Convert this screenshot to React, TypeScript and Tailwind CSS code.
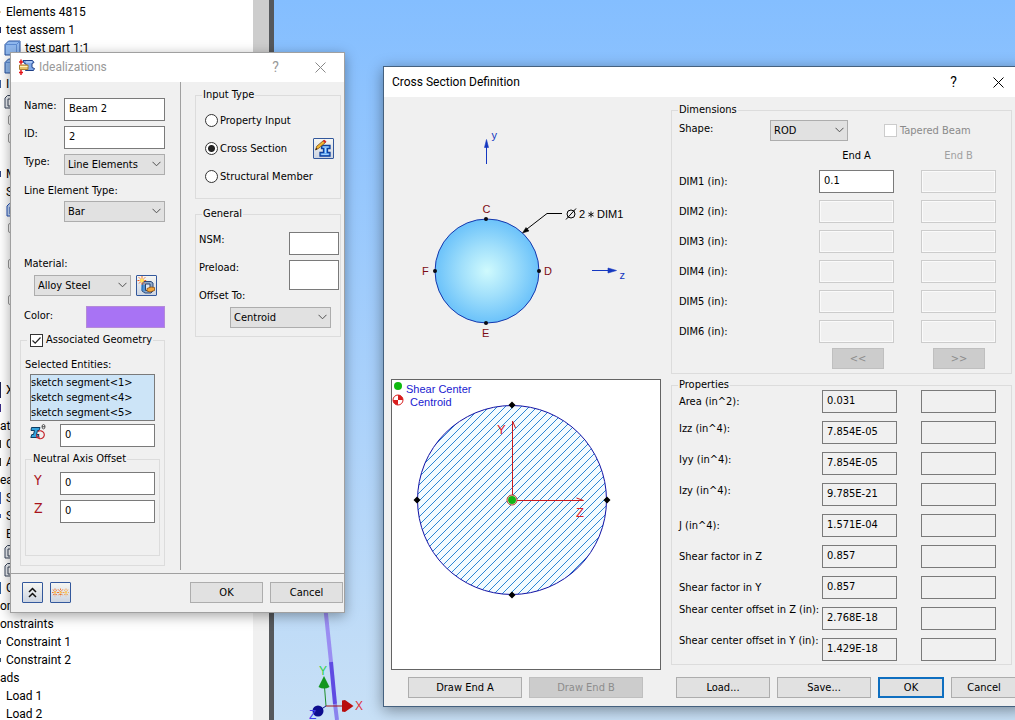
import React, { ReactNode, useState } from "react";

const UI_FONT = "font-['DejaVu_Sans_Condensed','DejaVu_Sans',sans-serif]";
const TITLE_FONT = "font-[Roboto,'Open_Sans',sans-serif]";

/* ---------- form controls ---------- */

type FieldProps = { id: string; label?: string; value?: string; disabled?: boolean; readOnly?: boolean; className?: string };

function TextField({ id, label, value = "", disabled, readOnly, className = "h-[23px]" }: FieldProps) {
  const tone = disabled
    ? "border-[#cccccc] bg-[#f0f0f0] shadow-[inset_0_0_0_1px_#fafafa]"
    : readOnly
      ? "border-[#7a7a7a] bg-[#f0f0f0]"
      : "border-[#7a7a7a] bg-white";
  return (
    <input
      id={id}
      type="text"
      aria-label={label}
      defaultValue={value}
      disabled={disabled}
      readOnly={readOnly}
      className={`block w-full min-w-0 border px-1 pb-0.5 text-[11px] leading-[14px] text-black outline-none ${tone} ${className}`}
    />
  );
}

function Select({ id, label, value, className = "" }: { id: string; label?: string; value: string; className?: string }) {
  return (
    <div className={`relative h-[21px] ${className}`}>
      <select
        id={id}
        aria-label={label}
        defaultValue={value}
        className="h-full w-full appearance-none border border-[#adadad] bg-[#e1e1e1] pr-4 pl-[3px] text-[11px] leading-[14px] text-black outline-none"
      >
        <option>{value}</option>
      </select>
      <svg className="pointer-events-none absolute top-[7px] right-1 h-[6px] w-[9px]" viewBox="0 0 9 6" fill="none" stroke="#505050">
        <path d="M0.5 0.8 4.5 4.8 8.5 0.8" />
      </svg>
    </div>
  );
}

function PushButton({ children, disabled, primary, className = "" }: { children: ReactNode; disabled?: boolean; primary?: boolean; className?: string }) {
  const tone = disabled
    ? "border border-[#bfbfbf] bg-[#cccccc] text-[#8c8c8c]"
    : primary
      ? "border-2 border-[#0f6fc0] bg-[#e1e1e1] text-black"
      : "border border-[#adadad] bg-[#e1e1e1] text-black";
  return (
    <button type="button" disabled={disabled} className={`flex h-[21px] shrink-0 items-center justify-center text-[11px] leading-[14px] ${tone} ${className}`}>
      {children}
    </button>
  );
}

function IconButton({ label, children }: { label: string; children: ReactNode }) {
  return (
    <button
      type="button"
      aria-label={label}
      className="flex h-[21px] w-[21px] shrink-0 items-center justify-center rounded-[1px] border border-[#33589c] bg-linear-to-b from-[#f6f6f2] to-[#cdd5e2]"
    >
      {children}
    </button>
  );
}

function Group({ title, children, className = "", body = "" }: { title: ReactNode; children: ReactNode; className?: string; body?: string }) {
  return (
    <fieldset className={`min-w-0 border border-[#dcdcdc] ${className}`}>
      <legend className="ml-[6px] h-[14px] px-px leading-[14px]">{title}</legend>
      <div className={body}>{children}</div>
    </fieldset>
  );
}

function Radio({ id, label, checked, onSelect }: { id: string; label: string; checked: boolean; onSelect: () => void }) {
  return (
    <div className="flex items-center gap-0.5">
      <input
        id={id}
        type="radio"
        name="input-type"
        checked={checked}
        onChange={onSelect}
        className="h-[13px] w-[13px] appearance-none rounded-full border border-[#333333] bg-white checked:bg-[radial-gradient(circle,#222_0,#222_3px,#fff_4px)]"
      />
      <label htmlFor={id}>{label}</label>
    </div>
  );
}

/* ---------- icons ---------- */

function IdealizationIcon() {
  return (
    <svg width="17" height="17" viewBox="0 0 17 17">
      <path d="M5 1.500h9.500l1.500 2-2 1v4l2.500 1-1 2H7.500L6 10l2-1.500V5L6 4z" fill="#7fa9ea" stroke="#1f3f86" />
      <path d="M8 3h6" stroke="#d6e6ff" />
      <path d="M1.500 6h8.500v4.500H1.500z" fill="#e9c36a" stroke="#a87f34" />
      <path d="M2 7.500h7.500" stroke="#fff2bf" />
      <path d="M3 0.500v5M1 3h4M3 11v5M1 13.500h4" stroke="#e3161b" strokeWidth="1.500" />
    </svg>
  );
}

function SectionEditIcon() {
  return (
    <svg width="19" height="19" viewBox="0 0 19 19">
      <path d="M7.500 6.500H16v3h-2.500v4H16V17H6v-3.500h3.500v-4h-2z" fill="#5aa5f5" stroke="#0e3f9d" strokeWidth="1.300" />
      <path d="M9 8h5.500M11.500 9v5M7.500 15.300h7" stroke="#b6dcff" />
      <path d="m1.500 11 1.300-3.800L9.500 1.500l2 2L4.800 9.200z" fill="#f2b632" stroke="#7a4a12" strokeWidth=".8" />
      <path d="m8.800 2.100 1.700-1.400 2 2-1.700 1.400z" fill="#d92626" />
      <path d="m1.500 11 .6-1.900 1.300 1z" fill="#111" />
    </svg>
  );
}

function NewMaterialIcon() {
  return (
    <svg width="19" height="19" viewBox="0 0 19 19">
      <path d="M6 5.500h8l2 1.500v8l-2 2H8l-3-2z" fill="#8fa9c9" stroke="#2c4a7c" />
      <path d="M8.500 8h4.500v6.500H8.500z" fill="#dbe7f5" stroke="#27426d" />
      <path d="M5 8.500v6M7 9v6.500" stroke="#2e86d8" strokeWidth="1.300" />
      <path d="m10 12.500 4-1.500 3.500.5v3L13 16l-3-1z" fill="#f0a53a" stroke="#8a4e10" strokeWidth=".8" />
      <path d="M5 0v9M0.500 4.500h9M1.800 1.300l6.400 6.400M8.200 1.300 1.800 7.700" stroke="#ee5a1b" strokeDasharray="1.800 .5" />
      <circle cx="5" cy="4.500" r="1.900" fill="#ffe45a" />
    </svg>
  );
}

function RotateSectionIcon() {
  return (
    <svg width="17" height="17" viewBox="0 0 17 17">
      <path d="M1.500 3.500h8.500l-1 3H7.500l-1 4H9l-1 3H0.800l1-3h1.700l1-4H1z" fill="#36a3dc" stroke="#0b3c62" />
      <path d="M7 13a4 4 0 1 0 1-5.500M6.500 10.500 7 13.500l3-.5" fill="none" stroke="#c5262c" strokeWidth="1.200" />
      <ellipse cx="13.500" cy="2.700" rx="1.500" ry="2.200" fill="none" stroke="#333" strokeWidth=".8" />
      <path d="M12 2.700h3" stroke="#333" strokeWidth=".8" />
    </svg>
  );
}

function CollapseIcon() {
  return (
    <svg width="11" height="13" viewBox="0 0 11 13" fill="none" stroke="#111" strokeWidth="1.500">
      <path d="m2 6 3.500-3.500L9 6M2 11l3.500-3.500L9 11" />
    </svg>
  );
}

function SparksIcon() {
  return (
    <svg width="17" height="11" viewBox="0 0 17 11" strokeWidth="1">
      {[3, 8.5, 14].map((x, i) => (
        <g key={x} stroke={i === 2 ? "#f5a04a" : "#ee6a22"} opacity="0.9">
          <path
            d={`M${x} 1.500v8M${x - 3} 5.500h6M${x - 2} 2.500l4 6M${x + 2} 2.500l-4 6`}
            strokeDasharray="1.6 1"
          />
          <circle cx={x} cy="5.500" r="1" fill="#ffd34a" stroke="none" />
        </g>
      ))}
    </svg>
  );
}

function CloseIcon() {
  return (
    <svg width="11" height="11" viewBox="0 0 11 11" stroke="currentColor">
      <path d="m0.500 0.500 10 10M10.500 0.500l-10 10" />
    </svg>
  );
}

/* ---------- model tree behind the dialogs ---------- */

type Node = { text?: string; x?: string; icon?: "part" | "box" | "copy"; box?: boolean; mark?: string };

const EDGE = "pl-[6px]";
const nodes: Node[] = [
  { text: "Elements 4815", x: EDGE, mark: "bg-[#c89a4a] h-px" },
  { text: "test assem 1", x: EDGE, mark: "bg-[#1d2c66] h-1.5" },
  { text: "test part 1:1", x: "pl-[4px]", icon: "part" },
  { text: "", x: "pl-[4px]", icon: "part" },
  { text: "I", x: EDGE, mark: "bg-[#3b5f9d] h-2" },
  { x: "pl-[4px]", icon: "box" },
  { box: true },
  { box: true },
  {},
  { text: "M", x: EDGE, mark: "bg-[#2e4686] h-1.5" },
  { text: "S", x: EDGE },
  { x: "pl-[6px]", icon: "copy" },
  { box: true },
  {},
  { box: true },
  {},
  { box: true },
  {}, {}, {}, {},
  { text: "X", x: EDGE, mark: "bg-[#1d2456] h-4" },
  { mark: "bg-[#3a2a86] h-2" },
  { text: "ate", x: "pl-0" },
  { text: "C", x: EDGE, mark: "bg-[#333333] h-2" },
  { text: "A", x: EDGE, mark: "bg-[#333333] h-2" },
  { text: "ea", x: "pl-0" },
  { text: "S", x: EDGE, mark: "bg-[#3a5cae] h-3" },
  { text: "S", x: EDGE, mark: "bg-[#3a5cae] h-1" },
  { text: "E", x: EDGE },
  { x: "pl-[4px]", icon: "box" },
  { x: "pl-[4px]", icon: "box" },
  { text: "G", x: EDGE, mark: "bg-[#2f5f9e] h-3" },
  { text: "om", x: "pl-0" },
  { text: "onstraints", x: "pl-0" },
  { text: "Constraint 1", x: EDGE, mark: "bg-[#35506e] h-1" },
  { text: "Constraint 2", x: EDGE, mark: "bg-[#35506e] h-1" },
  { text: "ads", x: "pl-0" },
  { text: "Load 1", x: EDGE },
  { text: "Load 2", x: EDGE },
];

function TreeIcon({ kind }: { kind: "part" | "box" | "copy" }) {
  if (kind === "part") {
    return (
      <svg width="17" height="16" viewBox="0 0 17 16">
        <path d="M1 4.500 4.500 1H16v10.500L13 15H1z" fill="#8fb8ee" stroke="#27509c" />
        <path d="M1 4.500h11.500V15M12.500 4.500 16 1" fill="none" stroke="#5c8bd2" />
      </svg>
    );
  }
  return (
    <svg width="15" height="14" viewBox="0 0 15 14" fill={kind === "copy" ? "#c3d8f8" : "#e9edf2"} stroke={kind === "copy" ? "#2550b0" : "#39455a"}>
      <path d="M1 3 3.500 0.500H14v9L11.500 13H1z" />
      <path d="M4 4h8v7H4z" fill="#fff" />
    </svg>
  );
}

function ModelTree() {
  return (
    <div className="flex h-full w-[274px] shrink-0">
      <ul className={`min-w-0 flex-1 overflow-hidden bg-white pt-[3px] text-[12px] whitespace-nowrap text-black ${TITLE_FONT}`}>
        {nodes.map((n, i) => (
          <li key={i} className={`relative flex h-[18px] items-center gap-1 leading-[18px] ${n.x ?? "pl-[8px]"}`}>
            {n.mark && <i className={`absolute top-1/2 left-0 w-px -translate-y-1/2 ${n.mark}`} />}
            {n.icon && <TreeIcon kind={n.icon} />}
            {n.box && <i className="h-[10px] w-[10px] rounded-[2px] border border-[#999999]" />}
            {n.text}
          </li>
        ))}
      </ul>
      <div className="flex w-4 flex-col bg-[#f0f0f0]">
        <div className="h-1/2 bg-[#cdcdcd]" />
      </div>
      <div className="w-[5px] bg-[#55585c]" />
    </div>
  );
}

function Viewport() {
  return (
    <div className="flex min-w-0 flex-1 items-end bg-linear-to-b from-[#84beff] to-[#c8e0f6]">
      <svg width="110" height="120" viewBox="274 600 110 120" className="font-['Liberation_Sans',sans-serif] text-[12px]">
        <path d="M324.500 600 331 662" stroke="#9a8df2" strokeWidth="4" />
        <path d="M331 662 335 704" stroke="#5f4be2" strokeWidth="4" />
        <path d="M335 704 337 720" stroke="#8a83ee" strokeWidth="4" />
        <path d="M326 706 324.500 687" stroke="#1f8f2c" />
        <path d="M324 676 318.500 687q5.500 3 11 0z" fill="#12961f" />
        <path d="M326 706h17" stroke="#a31219" />
        <path d="M342 700.500v11l3 .5 8.500-6-8.500-6z" fill="#b80d0d" />
        <path d="m326 706-6 4" stroke="#15158c" />
        <circle cx="318" cy="711" r="5.500" fill="#0d0d8e" />
        <text x="319" y="675" fill="#2fd04a">Y</text>
        <text x="355" y="710" fill="#e0343c">X</text>
        <text x="309" y="719" fill="#3c3cf0">Z</text>
      </svg>
    </div>
  );
}

/* ---------- Idealizations dialog ---------- */

function IdealizationsDialog() {
  const [kind, setKind] = useState("cross");
  const [linked, setLinked] = useState(true);
  return (
    <section
      aria-label="Idealizations"
      className="absolute top-[52px] left-[10px] flex w-[335px] flex-col border border-[#a0a0a0] bg-[#f0f0f0] text-[11px] leading-[14px] text-black shadow-[0_3px_12px_rgba(0,0,0,0.35)]"
    >
      <header className={`flex h-[29px] items-center bg-white pr-px pb-px pl-[7px] text-[12px] text-[#999999] ${TITLE_FONT}`}>
        <IdealizationIcon />
        <h2 className="flex-1 pl-1">Idealizations</h2>
        <button type="button" aria-label="Help" className="flex w-[45px] justify-center text-[14px]">?</button>
        <button type="button" aria-label="Close" className="flex w-[45px] justify-center text-[#888888]"><CloseIcon /></button>
      </header>

      <div className="flex pb-[3px]">
        <div className="flex w-[170px] flex-col border-r border-[#a0a0a0] pt-4 pr-[15px] pb-1 pl-[13px]">
          <div className="grid grid-cols-[40px_1fr] items-start gap-y-[5px]">
            <label htmlFor="name" className="leading-4">Name:</label>
            <TextField id="name" value="Beam 2" />
            <label htmlFor="beam-id" className="leading-4">ID:</label>
            <TextField id="beam-id" value="2" />
            <label htmlFor="type" className="leading-4">Type:</label>
            <Select id="type" value="Line Elements" />
          </div>
          <label htmlFor="line-type" className="mt-2 leading-4">Line Element Type:</label>
          <Select id="line-type" value="Bar" className="mt-0.5 ml-10" />

          <label htmlFor="material" className="mt-[34px] leading-4">Material:</label>
          <div className="mt-[3px] mr-2 ml-[10px] flex gap-[5px]">
            <Select id="material" value="Alloy Steel" className="flex-1" />
            <IconButton label="New material"><NewMaterialIcon /></IconButton>
          </div>
          <div className="mt-[10px] flex justify-between">
            <span className="pt-0.5 leading-4">Color:</span>
            <button type="button" aria-label="Color" className="h-[22px] w-[79px] border border-[#b48ad8] bg-[#a873f4]" />
          </div>

          <Group
            className="mt-[5px] -ml-1"
            body="px-1 pb-[9px]"
            title={
              <span className="flex items-center gap-[3px] pl-0.5">
                <span className="relative flex">
                  <input
                    id="linked"
                    type="checkbox"
                    checked={linked}
                    onChange={() => setLinked(!linked)}
                    className="h-[13px] w-[13px] appearance-none border border-[#333333] bg-white"
                  />
                  {linked && (
                    <svg className="pointer-events-none absolute inset-0" width="13" height="13" viewBox="0 0 13 13" fill="none" stroke="#222" strokeWidth="1.200">
                      <path d="m2.500 6.500 2.700 2.700 5.300-5.700" />
                    </svg>
                  )}
                </span>
                <label htmlFor="linked">Associated Geometry</label>
              </span>
            }
          >
            <div className="pt-[10px] leading-4">Selected Entities:</div>
            <ul role="listbox" aria-label="Selected Entities" className="mx-[5px] mt-px border border-[#7a7a7a] bg-[#cce4f7] leading-[15px]">
              <li role="option" aria-selected="true">sketch segment&lt;1&gt;</li>
              <li role="option" aria-selected="true">sketch segment&lt;4&gt;</li>
              <li role="option" aria-selected="true">sketch segment&lt;5&gt;</li>
            </ul>
            <div className="mx-[5px] mt-[3px] grid grid-cols-[30px_1fr]">
              <RotateSectionIcon />
              <TextField id="angle" label="Orientation angle" value="0" />
            </div>
            <Group title="Neutral Axis Offset" className="mt-[5px]" body="px-1 pb-8">
              <div className="grid grid-cols-[30px_1fr] items-start gap-y-[5px] pt-[6px]">
                <label htmlFor="off-y" className="pl-1 text-[14px] leading-4 text-[#a8141c]">Y</label>
                <TextField id="off-y" value="0" />
                <label htmlFor="off-z" className="pl-1 text-[14px] leading-4 text-[#a8141c]">Z</label>
                <TextField id="off-z" value="0" />
              </div>
            </Group>
          </Group>
        </div>

        <div className="flex min-w-0 flex-1 flex-col gap-2 pt-[6px] pr-[3px] pl-[14px]">
          <Group title="Input Type" body="pr-[6px] pb-[11px] pl-[9px]">
            <div className="flex flex-col gap-[7px] pt-2">
              <div className="flex h-[21px] items-center">
                <Radio id="in-prop" label="Property Input" checked={kind === "prop"} onSelect={() => setKind("prop")} />
              </div>
              <div className="flex h-[21px] items-center justify-between">
                <Radio id="in-cross" label="Cross Section" checked={kind === "cross"} onSelect={() => setKind("cross")} />
                <IconButton label="Edit cross section"><SectionEditIcon /></IconButton>
              </div>
              <div className="flex h-[21px] items-center">
                <Radio id="in-member" label="Structural Member" checked={kind === "member"} onSelect={() => setKind("member")} />
              </div>
            </div>
          </Group>
          <Group title="General" body="pr-px pb-2 pl-[3px]">
            <div className="grid grid-cols-[1fr_50px] items-start gap-y-[5px] pt-[11px]">
              <label htmlFor="nsm" className="leading-4">NSM:</label>
              <TextField id="nsm" />
              <label htmlFor="preload" className="leading-4">Preload:</label>
              <TextField id="preload" className="h-[30px]" />
            </div>
            <label htmlFor="offset-to" className="-mt-0.5 block leading-4">Offset To:</label>
            <Select id="offset-to" value="Centroid" className="mt-[3px] mr-2 ml-[31px]" />
          </Group>
        </div>
      </div>

      <footer className="flex gap-[7px] border-t border-[#a0a0a0] pt-2 pr-px pb-[9px] pl-[11px]">
        <IconButton label="Collapse"><CollapseIcon /></IconButton>
        <IconButton label="Preview"><SparksIcon /></IconButton>
        <PushButton className="ml-auto w-[73px]">OK</PushButton>
        <PushButton className="w-[73px]">Cancel</PushButton>
      </footer>
    </section>
  );
}

/* ---------- Cross Section Definition dialog ---------- */

function ShapeDiagram() {
  return (
    <svg width="270" height="282" viewBox="391 97 270 282" className="font-['Liberation_Sans',sans-serif] text-[11px]">
      <defs>
        <radialGradient id="rod">
          <stop offset="0" stopColor="#cffafd" />
          <stop offset="0.500" stopColor="#a0dffb" />
          <stop offset="1" stopColor="#6bc2fa" />
        </radialGradient>
      </defs>
      <circle cx="487" cy="271" r="52" fill="url(#rod)" stroke="#1437ae" />
      <g fill="#0a0a14">
        <circle cx="486" cy="219" r="2" />
        <circle cx="539" cy="271" r="2" />
        <circle cx="486" cy="323" r="2" />
        <circle cx="435" cy="271" r="2" />
      </g>
      <g stroke="#1437c0" fill="#1437c0">
        <path d="M486.500 164v-18" />
        <path d="M486.500 139.500 484.500 147.500h4z" strokeWidth=".6" />
        <path d="M592 270.500h17" />
        <path d="M616.500 270.500 608 268v5z" strokeWidth=".6" />
      </g>
      <path d="M562 213.500h-15L527 229" fill="none" stroke="#000" />
      <path d="m522.500 233 3.500-5.500 3 3.500z" fill="#000" stroke="#000" strokeWidth=".5" />
      <g fill="#1437c0">
        <text x="491.500" y="139">y</text>
        <text x="619.500" y="279">z</text>
      </g>
      <g fill="#7c0b12">
        <text x="482.500" y="213">C</text>
        <text x="544" y="275">D</text>
        <text x="482" y="337">E</text>
        <text x="422" y="275">F</text>
      </g>
      <g fill="none" stroke="#000">
        <circle cx="571" cy="214" r="4" />
        <path d="m566 219.500 10-11" />
      </g>
      <g fill="#000">
        <text x="579" y="218">2</text>
        <text x="597" y="218">DIM1</text>
      </g>
      <path d="M591 211.500v6M588.400 213l5.200 3M593.600 213l-5.200 3" stroke="#000" strokeWidth=".9" />
    </svg>
  );
}

function SectionPreview() {
  return (
    <svg width="268" height="289" viewBox="392 380 268 289" className="block font-['Liberation_Sans',sans-serif] text-[11px]">
      <defs>
        <pattern id="hatch" width="8" height="8" patternUnits="userSpaceOnUse">
          <rect width="8" height="8" fill="#f3fbff" />
          <path d="M-1 9 9-1M-1 1 1-1M7 9l2-2" stroke="#2b86d4" shapeRendering="crispEdges" />
        </pattern>
      </defs>
      <circle cx="512" cy="500" r="94.500" fill="url(#hatch)" stroke="#1010a4" />
      <path d="m512 401.500 3.500 3.500-3.500 3.500-3.500-3.500zM607 496.500l3.500 3.500-3.500 3.500-3.500-3.500zM512 591.500l3.500 3.500-3.500 3.500-3.500-3.500zM417 496.500l3.500 3.500-3.500 3.500-3.500-3.500z" fill="#000" />
      <path d="M512.500 500v-79l3 7M512 500.500h71.500l-7-2.500" fill="none" stroke="#c81a20" />
      <circle cx="512" cy="500" r="5" fill="#fff" stroke="#b0332a" />
      <circle cx="512" cy="500" r="4" fill="#14b414" />
      <g fill="#d8232b" className="text-[13px]">
        <text x="497" y="434">Y</text>
        <text x="576" y="517">Z</text>
      </g>
      <circle cx="398" cy="386" r="4" fill="#0fb80f" />
      <circle cx="398" cy="400" r="5" fill="#fff" stroke="#d81e1e" />
      <path d="M398 400v-5a5 5 0 0 1 5 5zM398 400v5a5 5 0 0 1-5-5z" fill="#d81e1e" />
      <g fill="#1a1ad0">
        <text x="406" y="393">Shear Center</text>
        <text x="410" y="406">Centroid</text>
      </g>
    </svg>
  );
}

const dims = ["DIM1", "DIM2", "DIM3", "DIM4", "DIM5", "DIM6"];
const RAISED = "pb-[7px]";
const TOP = "self-start -mt-1";
const props: [string, string, string][] = [
  ["Area (in^2):", "0.031", ""],
  ["Izz (in^4):", "7.854E-05", RAISED],
  ["Iyy (in^4):", "7.854E-05", RAISED],
  ["Izy (in^4):", "9.785E-21", RAISED],
  ["J (in^4):", "1.571E-04", ""],
  ["Shear factor in Z", "0.857", ""],
  ["Shear factor in Y", "0.857", ""],
  ["Shear center offset in Z (in):", "2.768E-18", TOP],
  ["Shear center offset in Y (in):", "1.429E-18", TOP],
];

function CrossSectionDialog() {
  return (
    <section
      aria-label="Cross Section Definition"
      className="absolute top-[66px] left-[383px] flex w-[641px] flex-col border border-[#45617f] bg-[#f0f0f0] text-[11px] leading-[14px] text-black shadow-[0_3px_14px_rgba(0,0,0,0.4)]"
    >
      <header className={`flex h-[30px] items-center bg-white pr-0.5 pl-2 text-[12px] ${TITLE_FONT}`}>
        <h2 className="flex-1">Cross Section Definition</h2>
        <button type="button" aria-label="Help" className="flex w-[45px] justify-center text-[14px]">?</button>
        <button type="button" aria-label="Close" className="flex w-[45px] justify-center"><CloseIcon /></button>
      </header>

      <div className="flex gap-[10px] pr-[11px] pl-[7px]">
        <div className="w-[270px] shrink-0">
          <ShapeDiagram />
          <div className="border border-[#646464] bg-white"><SectionPreview /></div>
        </div>

        <div className="flex min-w-0 flex-1 flex-col gap-1 pt-[6px]">
          <Group title="Dimensions" body="pb-1 pl-[7px]">
            <div className="flex items-center pt-[3px]">
              <label htmlFor="shape" className="w-[91px] pb-1">Shape:</label>
              <Select id="shape" value="ROD" className="w-[78px]" />
              <input id="tapered" type="checkbox" disabled className="ml-9 h-[13px] w-[13px] appearance-none border border-[#cccccc] bg-white" />
              <label htmlFor="tapered" className="pl-[3px] text-[#8a8a8a]">Tapered Beam</label>
            </div>
            <div className="mt-2 grid grid-cols-[140px_75px_27px_75px] items-center gap-y-[7px]">
              <span />
              <span className="text-center">End A</span>
              <span />
              <span className="text-center text-[#a0a0a0]">End B</span>
              {dims.map((d, i) => (
                <React.Fragment key={d}>
                  <label htmlFor={`${d}-a`}>{d} (in):</label>
                  <TextField id={`${d}-a`} value={i === 0 ? "0.1" : ""} disabled={i > 0} />
                  <span />
                  <TextField id={`${d}-b`} label={`${d} End B`} disabled />
                </React.Fragment>
              ))}
            </div>
            <div className="mt-[5px] flex gap-[49px] pl-[153px]">
              <PushButton disabled className="w-[52px]">&lt;&lt;</PushButton>
              <PushButton disabled className="w-[52px]">&gt;&gt;</PushButton>
            </div>
          </Group>

          <Group title="Properties" body="pb-[3px] pl-[7px]">
            <div className="-mt-0.5 grid grid-cols-[143px_75px_24px_75px] items-center gap-y-2">
              {props.map(([name, value, align], i) => (
                <React.Fragment key={name}>
                  <label htmlFor={`prop-${i}`} className={`whitespace-nowrap ${align}`}>{name}</label>
                  <TextField id={`prop-${i}`} value={value} readOnly />
                  <span />
                  <TextField id={`prop-${i}-b`} label={`${name} End B`} readOnly />
                </React.Fragment>
              ))}
            </div>
          </Group>
        </div>
      </div>

      <footer className="flex gap-[7px] pt-[7px] pb-2 pl-6">
        <PushButton className="w-[114px]">Draw End A</PushButton>
        <PushButton disabled className="mr-[26px] w-[114px]">Draw End B</PushButton>
        <PushButton className="w-[94px]">Load...</PushButton>
        <PushButton className="w-[94px]">Save...</PushButton>
        <PushButton primary className="w-[66px]">OK</PushButton>
        <PushButton className="w-[66px]">Cancel</PushButton>
      </footer>
    </section>
  );
}

export default function App() {
  return (
    <main className={`relative flex h-screen w-full overflow-hidden ${UI_FONT}`}>
      <ModelTree />
      <Viewport />
      <CrossSectionDialog />
      <IdealizationsDialog />
    </main>
  );
}
